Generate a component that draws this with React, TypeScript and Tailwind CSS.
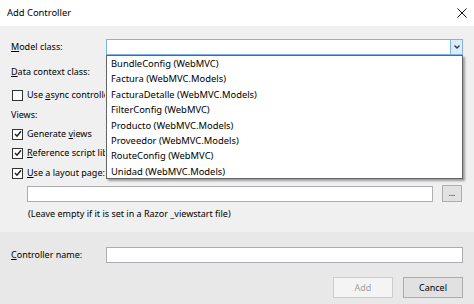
import type { ReactNode } from "react";

const items = [
	"BundleConfig (WebMVC)",
	"Factura (WebMVC.Models)",
	"FacturaDetalle (WebMVC.Models)",
	"FilterConfig (WebMVC)",
	"Producto (WebMVC.Models)",
	"Proveedor (WebMVC.Models)",
	"RouteConfig (WebMVC)",
	"Unidad (WebMVC.Models)",
];

function Check({ checked, children }: { checked?: boolean; children: ReactNode }) {
	return (
		<div className="flex items-center h-4 gap-[4px] whitespace-nowrap w-[94px] overflow-hidden">
			<span className="ml-[1px] w-[11px] h-[11px] border border-[#333333] bg-white flex items-center justify-center shrink-0">
				{checked && (
					<svg width="8" height="8" viewBox="0 0 8 8">
						<path d="M1 4 L3 6.2 L7 1.2" fill="none" stroke="#222" strokeWidth="1.5" />
					</svg>
				)}
			</span>
			<span>{children}</span>
		</div>
	);
}

export default function App() {
	return (
		<div className="w-[474px] h-[304px] bg-[#f0f0f0] flex flex-col overflow-hidden text-[9px] text-black font-['Segoe_UI','Noto_Sans',sans-serif] leading-4">
			<div className="h-[26px] bg-white flex items-center justify-between pl-[7px] pr-[7px] shrink-0 text-[9.4px]">
				<span>Add Controller</span>
				<svg width="10" height="10" viewBox="0 0 10 10">
					<path d="M0.5 0.5 L9.5 9.5 M9.5 0.5 L0.5 9.5" stroke="#111" strokeWidth="1" />
				</svg>
			</div>

			<div className="flex-1 flex flex-col pl-[11px] pr-[11px]">
				<div className="flex items-center mt-[13px] h-4">
					<span className="w-[95px] shrink-0 whitespace-nowrap">
						<u>M</u>odel class:
					</span>
					<div className="relative flex-1">
						<div className="h-4 bg-white border border-[#7eb4ea] flex justify-end">
							<div className="w-[12px] bg-[#dcecfc] border-l border-[#7eb4ea] flex items-center justify-center">
								<svg width="6" height="4" viewBox="0 0 6 4">
									<path d="M0.5 0.5 L3 3 L5.5 0.5" fill="none" stroke="#333" strokeWidth="1.3" />
								</svg>
							</div>
						</div>
						<div className="absolute left-0 top-4 w-[357px] h-[124px] bg-white border border-[#646464] shadow-[2px_2px_2px_rgba(0,0,0,0.35)] z-10 text-[9.4px]">
							{items.map((it) => (
								<div key={it} className="pl-[4px] h-[15.4px] leading-[15.4px] whitespace-nowrap">
									{it}
								</div>
							))}
						</div>
					</div>
				</div>

				<div className="flex items-center mt-[9px] h-4">
					<span className="w-[95px] shrink-0 whitespace-nowrap">
						<u>D</u>ata context class:
					</span>
					<div className="flex-1 h-4 bg-white border border-[#abadb3]" />
				</div>

				<div className="mt-[7px]">
					<Check>
						Use <u>a</u>sync controller actions
					</Check>
				</div>

				<div className="mt-[4px] h-4">Views:</div>

				<div className="mt-[3px]">
					<Check checked>
						Generate <u>v</u>iews
					</Check>
				</div>
				<div className="mt-[3px]">
					<Check checked>
						<u>R</u>eference script libraries
					</Check>
				</div>
				<div className="mt-[4px]">
					<Check checked>
						<u>U</u>se a layout page:
					</Check>
				</div>

				<div className="flex items-center mt-[4px] pl-[16px]">
					<div className="w-[406px] h-4 bg-white border border-[#abadb3]" />
					<div className="ml-[9px] w-[20px] h-[17px] bg-[#e1e1e1] border border-[#adadad] flex items-center justify-center text-[8px] leading-none pb-[2px]">
						...
					</div>
				</div>

				<div className="mt-[4px] pl-[17px] h-4 whitespace-nowrap">
					(Leave empty if it is set in a Razor _viewstart file)
				</div>
			</div>

			<div className="h-[72px] bg-[#e8e8e8] shrink-0 flex flex-col pl-[11px] pr-[11px]">
				<div className="flex items-center mt-[15px] h-4">
					<span className="w-[95px] shrink-0 whitespace-nowrap">
						<u>C</u>ontroller name:
					</span>
					<div className="flex-1 h-4 bg-white border border-[#abadb3]" />
				</div>
				<div className="flex justify-end gap-[10px] mt-[14px]">
					<div className="w-[60px] h-[21px] bg-[#f4f4f4] border border-[#cccccc] text-[#a0a0a0] flex items-center justify-center">
						Add
					</div>
					<div className="w-[60px] h-[21px] bg-[#e1e1e1] border border-[#adadad] flex items-center justify-center">
						Cancel
					</div>
				</div>
			</div>
		</div>
	);
}
